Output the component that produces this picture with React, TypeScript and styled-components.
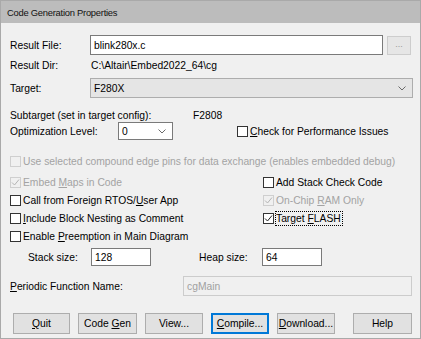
import React from "react";
import styled, { createGlobalStyle, css } from "styled-components";

const GlobalStyle = createGlobalStyle`
  html, body { margin: 0; padding: 0; background: #f0f0f0; }
  * { box-sizing: border-box; }
`;

const Window = styled.div`
  width: 421px;
  height: 339px;
  border: 1px solid #a9a9a9;
  background: #f0f0f0;
  display: flex;
  flex-direction: column;
  font-family: "Liberation Sans", Arial, sans-serif;
  font-size: 10.3px;
  color: #000;
  overflow: hidden;
`;

const TitleBar = styled.div`
  height: 22px;
  background: #bcbcbc;
  display: flex;
  align-items: center;
  padding-left: 6px;
  font-size: 9.4px;
  letter-spacing: -0.25px;
  color: #111;
`;

const Content = styled.div`
  display: flex;
  flex-direction: column;
  padding: 12px 7px 0 9px;
`;

const Row = styled.div<{ $h: number; $mt?: number }>`
  display: flex;
  align-items: center;
  height: ${(p) => p.$h}px;
  margin-top: ${(p) => p.$mt ?? 0}px;
`;

const Label = styled.span<{ $w?: number; $ml?: number; $disabled?: boolean }>`
  display: inline-block;
  flex: none;
  white-space: nowrap;
  ${(p) => p.$w !== undefined && css`width: ${p.$w}px;`}
  margin-left: ${(p) => p.$ml ?? 0}px;
  color: ${(p) => (p.$disabled ? "#a3a3a3" : "#000")};
`;

const TextBox = styled.div<{ $w: number; $h: number; $disabled?: boolean }>`
  flex: none;
  width: ${(p) => p.$w}px;
  height: ${(p) => p.$h}px;
  border: 1px solid ${(p) => (p.$disabled ? "#cccccc" : "#7a7a7a")};
  background: ${(p) => (p.$disabled ? "#f0f0f0" : "#ffffff")};
  color: ${(p) => (p.$disabled ? "#a0a0a0" : "#000")};
  display: flex;
  align-items: center;
  padding-left: 3px;
  white-space: nowrap;
`;

const BrowseButton = styled.div`
  flex: none;
  width: 24px;
  height: 19px;
  margin-left: 4px;
  border: 1px solid #cdcdcd;
  background: #e6e6e6;
  color: #9a9a9a;
  display: flex;
  align-items: center;
  justify-content: center;
  font-size: 9px;
  padding-bottom: 3px;
`;

const Select = styled.div<{ $w: number; $h: number; $variant: "list" | "edit" }>`
  flex: none;
  width: ${(p) => p.$w}px;
  height: ${(p) => p.$h}px;
  display: flex;
  align-items: center;
  justify-content: space-between;
  padding: 0 6px 0 3px;
  ${(p) =>
    p.$variant === "list"
      ? css`
          background: #e5e5e5;
          border: 1px solid #adadad;
        `
      : css`
          background: #ffffff;
          border: 1px solid #7a7a7a;
        `}
`;

const Chevron = () => (
  <svg width="8" height="5" viewBox="0 0 8 5">
    <path d="M0.5 0.5 L4 4 L7.5 0.5" fill="none" stroke="#6a6a6a" strokeWidth="1" />
  </svg>
);

const CheckGrid = styled.div<{ $mt: number }>`
  display: grid;
  grid-template-columns: 253px 1fr;
  grid-auto-rows: 16px;
  row-gap: 2px;
  margin-top: ${(p) => p.$mt}px;
`;

const CheckRow = styled.label<{ $disabled?: boolean; $ml?: number }>`
  display: flex;
  align-items: center;
  white-space: nowrap;
  margin-left: ${(p) => p.$ml ?? 0}px;
  color: ${(p) => (p.$disabled ? "#a3a3a3" : "#000")};
`;

const Box = styled.span<{ $disabled?: boolean }>`
  flex: none;
  width: 11px;
  height: 11px;
  margin-right: 2px;
  border: 1px solid ${(p) => (p.$disabled ? "#cfcfcf" : "#333333")};
  background: ${(p) => (p.$disabled ? "#f0f0f0" : "#ffffff")};
  display: flex;
  align-items: center;
  justify-content: center;
`;

const FocusText = styled.span`
  outline: 1px dotted #000;
  outline-offset: 0px;
  padding: 1px 1px 1px 0;
`;

const Mn = styled.span`
  text-decoration: underline;
  text-underline-offset: 1px;
`;

const ButtonBar = styled.div`
  display: flex;
  align-items: center;
  height: 21px;
  margin-top: 17px;
  padding-left: 3px;
  gap: 8px;
`;

const Button = styled.div<{ $w: number; $focused?: boolean; $push?: boolean }>`
  flex: none;
  width: ${(p) => p.$w}px;
  height: 21px;
  display: flex;
  align-items: center;
  justify-content: center;
  background: #e1e1e1;
  border: ${(p) => (p.$focused ? "2px solid #0078d7" : "1px solid #adadad")};
  margin-left: ${(p) => (p.$push ? 10 : 0)}px;
`;

type CheckProps = {
  checked?: boolean;
  disabled?: boolean;
  ml?: number;
  children: React.ReactNode;
};

const Check = ({ checked, disabled, ml, children }: CheckProps) => (
  <CheckRow $disabled={disabled} $ml={ml}>
    <Box $disabled={disabled}>
      {checked && (
        <svg width="9" height="9" viewBox="0 0 9 9">
          <path
            d="M1 4.5 L3.5 7 L8 1.5"
            fill="none"
            stroke={disabled ? "#b4b4b4" : "#222"}
            strokeWidth="1"
          />
        </svg>
      )}
    </Box>
    {children}
  </CheckRow>
);

export default function App() {
  return (
    <>
      <GlobalStyle />
      <Window>
        <TitleBar>Code Generation Properties</TitleBar>
        <Content>
          <Row $h={20}>
            <Label $w={80}>Result File:</Label>
            <TextBox $w={293} $h={20}>blink280x.c</TextBox>
            <BrowseButton>...</BrowseButton>
          </Row>
          <Row $h={16} $mt={2}>
            <Label $w={81}>Result Dir:</Label>
            <Label>C:\Altair\Embed2022_64\cg</Label>
          </Row>
          <Row $h={20} $mt={5}>
            <Label $w={80}>Target:</Label>
            <Select $w={323} $h={20} $variant="list">
              <span>F280X</span>
              <Chevron />
            </Select>
          </Row>
          <Row $h={14} $mt={10}>
            <Label $w={183}>Subtarget (set in target config):</Label>
            <Label>F2808</Label>
          </Row>
          <Row $h={18}>
            <Label $w={108}>Optimization Level:</Label>
            <Select $w={55} $h={18} $variant="edit">
              <span>0</span>
              <Chevron />
            </Select>
            <Check ml={64}>
              <span>
                <Mn>C</Mn>heck for Performance Issues
              </span>
            </Check>
          </Row>
          <CheckGrid $mt={16}>
            <div style={{ gridColumn: "1 / span 2" }}>
              <Check disabled>
                Use selected compound edge pins for data exchange (enables embedded debug)
              </Check>
            </div>
            <Check checked disabled>
              <span>
                Embed <Mn>M</Mn>aps in Code
              </span>
            </Check>
            <Check>Add Stack Check Code</Check>
            <Check>
              <span>
                Call from Foreign RTOS/<Mn>U</Mn>ser App
              </span>
            </Check>
            <Check checked disabled>
              <span>
                On-Chip <Mn>R</Mn>AM Only
              </span>
            </Check>
            <Check>
              <span>
                <Mn>I</Mn>nclude Block Nesting as Comment
              </span>
            </Check>
            <Check checked>
              <FocusText>
                Target <Mn>F</Mn>LASH
              </FocusText>
            </Check>
            <Check>
              <span>
                Enable <Mn>P</Mn>reemption in Main Diagram
              </span>
            </Check>
          </CheckGrid>
          <Row $h={18} $mt={4}>
            <Label $w={63} $ml={18}>Stack size:</Label>
            <TextBox $w={60} $h={18}>128</TextBox>
            <Label $w={63} $ml={48}>Heap size:</Label>
            <TextBox $w={60} $h={18}>64</TextBox>
          </Row>
          <Row $h={20} $mt={10}>
            <Label $w={173}>
              <Mn>P</Mn>eriodic Function Name:
            </Label>
            <TextBox $w={229} $h={20} $disabled>
              cgMain
            </TextBox>
          </Row>
          <ButtonBar>
            <Button $w={57}>
              <Mn>Q</Mn>uit
            </Button>
            <Button $w={59}>
              Code&nbsp;<Mn>G</Mn>en
            </Button>
            <Button $w={58}>View...</Button>
            <Button $w={58} $focused>
              <Mn>C</Mn>ompile...
            </Button>
            <Button $w={58}>
              <Mn>D</Mn>ownload...
            </Button>
            <Button $w={59} $push>
              Help
            </Button>
          </ButtonBar>
        </Content>
      </Window>
    </>
  );
}
